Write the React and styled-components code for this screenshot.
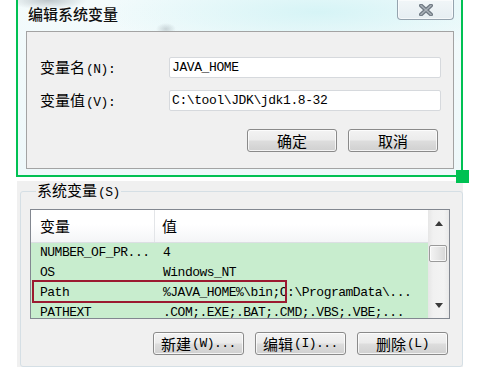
import React from 'react';
import styled, { createGlobalStyle } from 'styled-components';

const cjk = `"Noto Sans CJK SC", "Liberation Sans", sans-serif`;
const mono = `"Liberation Mono", "Noto Sans CJK SC", monospace`;

const GlobalStyle = createGlobalStyle`
  html, body {
    margin: 0;
    padding: 0;
    background: #fff;
  }
  body {
    font-family: ${mono};
    color: #000;
  }
`;

const Page = styled.div`
  width: 489px;
  height: 371px;
  overflow: hidden;
  background: #fff;
  display: flex;
  flex-direction: column;
`;

/* top dialog, framed by the green selection outline */
const Dialog = styled.div`
  position: relative;
  margin-left: 16px;
  width: 447px;
  height: 177px;
  box-sizing: border-box;
  border: 2px solid #00c153;
  border-top: none;
  padding: 0 7px 6px 8px;
  display: flex;
  flex-direction: column;
  background:
    radial-gradient(ellipse 40px 10px at 30px 0px, rgba(90, 100, 110, 0.35), transparent),
    radial-gradient(ellipse 10px 6px at 148px 29px, rgba(90, 100, 110, 0.25), transparent),
    radial-gradient(ellipse 220px 40px at 300px 12px, #d6f4f6, transparent),
    linear-gradient(#f3fbfc, #eef8fa);
`;

const Handle = styled.div`
  position: absolute;
  right: -8px;
  bottom: -8px;
  width: 13px;
  height: 13px;
  background: #00c153;
`;

const TitleBar = styled.div`
  height: 31px;
  display: flex;
  justify-content: space-between;
  align-items: flex-start;
  flex-shrink: 0;
`;

const Title = styled.div`
  margin: 4px 0 0 2px;
  font-family: ${cjk};
  font-size: 15px;
  font-weight: 500;
  line-height: 20px;
  color: #101010;
  text-shadow: 0 0 6px rgba(255, 255, 255, 0.9);
`;

const CloseButton = styled.div`
  width: 57px;
  height: 20px;
  box-sizing: border-box;
  border: 1px solid #95a3ae;
  border-top: none;
  border-radius: 0 0 4px 4px;
  background: linear-gradient(#f1f6f8, #e6eef2);
  box-shadow: inset 0 0 0 1px rgba(255, 255, 255, 0.6);
  display: flex;
  align-items: center;
  justify-content: center;
`;

const Panel = styled.div`
  flex: 1;
  border: 1px solid #a3a3a3;
  background: #f0f0f0;
  padding: 25px 12px 0 13px;
  display: flex;
  flex-direction: column;
  gap: 12px;
`;

const FieldRow = styled.div`
  display: flex;
  align-items: center;
  height: 21px;
`;

const Label = styled.div`
  width: 129px;
  font-family: ${cjk};
  font-size: 15px;
  line-height: 21px;
  white-space: nowrap;
`;

const Hint = styled.span`
  font-family: ${mono};
  font-size: 13px;
  letter-spacing: -0.5px;
  margin-left: 1px;
`;

const Input = styled.div`
  width: 272px;
  height: 21px;
  box-sizing: border-box;
  border: 1px solid #d6d9dd;
  border-radius: 2px;
  background: #fff;
  padding-left: 2px;
  font-family: ${mono};
  font-size: 13px;
  letter-spacing: -0.4px;
  line-height: 19px;
  white-space: nowrap;
  overflow: hidden;
`;

const ButtonRow = styled.div`
  display: flex;
  justify-content: flex-end;
  gap: ${(p) => p.$gap}px;
  margin-top: ${(p) => p.$top}px;
  padding-right: ${(p) => p.$right}px;
`;

const Button = styled.div`
  width: ${(p) => p.$w}px;
  height: 23px;
  box-sizing: border-box;
  border: 1px solid #8a8a8a;
  border-radius: 3px;
  background: linear-gradient(#f3f3f3 0%, #ebebeb 48%, #dddddd 52%, #d0d0d0 100%);
  box-shadow: inset 0 0 0 1px rgba(255, 255, 255, 0.75);
  display: flex;
  align-items: center;
  justify-content: center;
  font-family: ${cjk};
  font-size: 15px;
  line-height: 21px;
  white-space: nowrap;
`;

/* lower part: system variables */
const LowerPanel = styled.div`
  margin: 4px 0 0 17px;
  width: 446px;
  height: 186px;
  box-sizing: border-box;
  padding-left: 3px;
  background: #f0f0f0;
`;

const Group = styled.fieldset`
  margin: 1px 0 0 0;
  min-width: 0;
  padding: 8px 12px 11px 9px;
  border: 1px solid #d5dfe5;
  border-radius: 3px;
`;

const Legend = styled.legend`
  margin-left: 6px;
  padding: 0 1px;
  font-family: ${cjk};
  font-size: 15px;
  line-height: 16px;
  white-space: nowrap;
`;

const List = styled.div`
  position: relative;
  width: 420px;
  height: 110px;
  box-sizing: border-box;
  border: 1px solid #828790;
  background: #fff;
  display: flex;
`;

const ListMain = styled.div`
  flex: 1;
  overflow: hidden;
  display: flex;
  flex-direction: column;
`;

const HeaderRow = styled.div`
  display: grid;
  grid-template-columns: 124px 1fr;
  height: 33px;
  flex-shrink: 0;
  box-sizing: border-box;
  border-bottom: 1px solid #dcdfe3;
  background: linear-gradient(#ffffff 0%, #ffffff 45%, #f4f5f7 100%);
`;

const HeaderCell = styled.div`
  font-family: ${cjk};
  font-size: 15px;
  line-height: 31px;
  padding-left: ${(p) => p.$pad}px;
  border-right: ${(p) => (p.$divider ? '1px solid #e3e5e8' : 'none')};
`;

const Row = styled.div`
  display: grid;
  grid-template-columns: 125px 1fr;
  height: 20px;
  flex-shrink: 0;
  background: #c8edce;
  font-family: ${mono};
  font-size: 13px;
  letter-spacing: -0.5px;
  line-height: 20px;
  white-space: nowrap;
`;

const Cell = styled.div`
  padding-left: ${(p) => p.$pad}px;
  overflow: hidden;
`;

const Highlight = styled.div`
  position: absolute;
  left: 1px;
  top: 70px;
  width: 255px;
  height: 23px;
  box-sizing: border-box;
  border: 2px solid #9b1a30;
  pointer-events: none;
`;

const ScrollBar = styled.div`
  width: 21px;
  display: flex;
  flex-direction: column;
  background: linear-gradient(to right, #e6e6e6, #f1f1f1 25%, #f3f3f3 75%, #e9e9e9);
`;

const ScrollArrow = styled.div`
  height: 26px;
  display: flex;
  align-items: center;
  justify-content: center;
  flex-shrink: 0;
`;

const Track = styled.div`
  flex: 1;
`;

const Thumb = styled.div`
  margin: 9px 0 0 1px;
  width: 18px;
  height: 17px;
  box-sizing: border-box;
  border: 1px solid #9a9a9a;
  border-radius: 2px;
  background: linear-gradient(to right, #f4f4f4, #e6e6e6 50%, #d6d6d6);
  box-shadow: inset 0 0 0 1px rgba(255, 255, 255, 0.7);
`;

const Arrow = ({ down }) => (
  <svg width="8" height="5" viewBox="0 0 8 5">
    <path d={down ? 'M0 0 H8 L4 5 Z' : 'M0 5 H8 L4 0 Z'} fill="#3a3a3a" />
  </svg>
);

const CloseIcon = () => (
  <svg width="14" height="12" viewBox="0 0 14 12">
    <path d="M2 1.5 L12 10.5 M12 1.5 L2 10.5" stroke="#6f7983" strokeWidth="4" strokeLinecap="round" />
    <path d="M2 1.5 L12 10.5 M12 1.5 L2 10.5" stroke="#a9b1b8" strokeWidth="1.6" strokeLinecap="round" />
  </svg>
);

const rows = [
  ['NUMBER_OF_PR...', '4'],
  ['OS', 'Windows_NT'],
  ['Path', '%JAVA_HOME%\\bin;C:\\ProgramData\\...'],
  ['PATHEXT', '.COM;.EXE;.BAT;.CMD;.VBS;.VBE;...'],
];

export default function App() {
  return (
    <Page>
      <GlobalStyle />
      <Dialog>
        <TitleBar>
          <Title>编辑系统变量</Title>
          <CloseButton>
            <CloseIcon />
          </CloseButton>
        </TitleBar>
        <Panel>
          <FieldRow>
            <Label>
              变量名<Hint>(N):</Hint>
            </Label>
            <Input>JAVA_HOME</Input>
          </FieldRow>
          <FieldRow>
            <Label>
              变量值<Hint>(V):</Hint>
            </Label>
            <Input>C:\tool\JDK\jdk1.8-32</Input>
          </FieldRow>
          <ButtonRow $gap={11} $top={6} $right={3}>
            <Button $w={90}>确定</Button>
            <Button $w={90}>取消</Button>
          </ButtonRow>
        </Panel>
        <Handle />
      </Dialog>

      <LowerPanel>
        <Group>
          <Legend>
            系统变量<Hint>(S)</Hint>
          </Legend>
          <List>
            <ListMain>
              <HeaderRow>
                <HeaderCell $pad={9} $divider>变量</HeaderCell>
                <HeaderCell $pad={7}>值</HeaderCell>
              </HeaderRow>
              {rows.map(([name, value]) => (
                <Row key={name}>
                  <Cell $pad={9}>{name}</Cell>
                  <Cell $pad={7}>{value}</Cell>
                </Row>
              ))}
            </ListMain>
            <ScrollBar>
              <ScrollArrow>
                <Arrow />
              </ScrollArrow>
              <Track>
                <Thumb />
              </Track>
              <ScrollArrow>
                <Arrow down />
              </ScrollArrow>
            </ScrollBar>
            <Highlight />
          </List>
          <ButtonRow $gap={11} $top={13} $right={2}>
            <Button $w={91}>
              新建<Hint>(W)...</Hint>
            </Button>
            <Button $w={91}>
              编辑<Hint>(I)...</Hint>
            </Button>
            <Button $w={91}>
              删除<Hint>(L)</Hint>
            </Button>
          </ButtonRow>
        </Group>
      </LowerPanel>
    </Page>
  );
}
